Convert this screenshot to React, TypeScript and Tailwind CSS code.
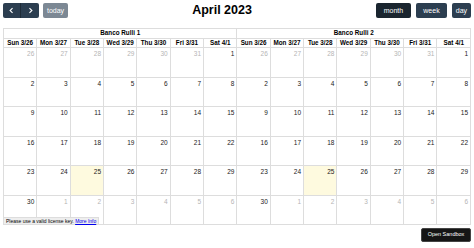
import React from 'react';

const dayHeaders = ['Sun 3/26', 'Mon 3/27', 'Tue 3/28', 'Wed 3/29', 'Thu 3/30', 'Fri 3/31', 'Sat 4/1'];
const resources = ['Banco Rulli 1', 'Banco Rulli 2'];

type Day = { n: number; other: boolean; today?: boolean };

const weeks: Day[][] = [
  [26, 27, 28, 29, 30, 31].map((n) => ({ n, other: true })).concat([{ n: 1, other: false }]),
  [2, 3, 4, 5, 6, 7, 8].map((n) => ({ n, other: false })),
  [9, 10, 11, 12, 13, 14, 15].map((n) => ({ n, other: false })),
  [16, 17, 18, 19, 20, 21, 22].map((n) => ({ n, other: false })),
  [23, 24, 25, 26, 27, 28, 29].map((n) => ({ n, other: false, today: n === 25 })),
  [{ n: 30, other: false }].concat([1, 2, 3, 4, 5, 6].map((n) => ({ n, other: true }))),
];

const Chevron: React.FC<{ dir: 'left' | 'right' }> = ({ dir }) => (
  <svg width="7" height="7" viewBox="0 0 10 10" className="block">
    <path
      d={dir === 'left' ? 'M6.5 1.5 L3 5 L6.5 8.5' : 'M3.5 1.5 L7 5 L3.5 8.5'}
      fill="none"
      stroke="white"
      strokeWidth="1.6"
    />
  </svg>
);

const App: React.FC = () => {
  return (
    <div className="w-[474px] h-[248px] bg-white p-[3px] text-black" style={{ fontFamily: '"Liberation Sans", Arial, sans-serif' }}>
      {/* Toolbar */}
      <div className="flex items-center justify-between h-[15px] mb-[10px]">
        <div className="flex items-center gap-[4px]">
          <div className="flex h-[15px] rounded-[2px] overflow-hidden">
            <button className="w-[18px] h-full bg-[#2c3e50] flex items-center justify-center border-r border-[#1e2b37]">
              <Chevron dir="left" />
            </button>
            <button className="w-[18px] h-full bg-[#2c3e50] flex items-center justify-center">
              <Chevron dir="right" />
            </button>
          </div>
          <button className="h-[15px] px-[4px] rounded-[2px] bg-[#7c8894] text-white text-[7px] leading-none">today</button>
        </div>
        <h2 className="text-[12.5px] font-bold leading-none">April 2023</h2>
        <div className="flex items-center gap-[5px]">
          <button className="h-[15px] w-[35px] rounded-[2px] bg-[#1a252f] text-white text-[7px] leading-none">month</button>
          <button className="h-[15px] w-[31px] rounded-[2px] bg-[#2c3e50] text-white text-[7px] leading-none">week</button>
          <button className="h-[15px] w-[19px] rounded-[2px] bg-[#2c3e50] text-white text-[7px] leading-none">day</button>
        </div>
      </div>

      {/* Calendar grid */}
      <div className="relative">
        <table className="w-full table-fixed border-collapse border border-[#ddd]">
          <thead>
            <tr className="h-[10px]">
              {resources.map((r) => (
                <th key={r} colSpan={7} className="border border-[#ddd] text-[6.3px] font-bold leading-none p-0">
                  {r}
                </th>
              ))}
            </tr>
            <tr className="h-[9px]">
              {resources.map((r) =>
                dayHeaders.map((d) => (
                  <th key={r + d} className="border border-[#ddd] text-[6.3px] font-bold leading-none p-0 whitespace-nowrap">
                    {d}
                  </th>
                ))
              )}
            </tr>
          </thead>
          <tbody>
            {weeks.map((week, wi) => (
              <tr key={wi} className="h-[29.5px]">
                {resources.map((r) =>
                  week.map((day, di) => (
                    <td
                      key={r + di}
                      className={`border border-[#ddd] align-top text-right p-0 pr-[2px] pt-[3px] text-[6.5px] leading-none ${
                        day.today ? 'bg-[#fefadf]' : ''
                      } ${day.other ? 'text-[#b5b5b5]' : 'text-[#222]'}`}
                    >
                      {day.n}
                    </td>
                  ))
                )}
              </tr>
            ))}
          </tbody>
        </table>
        <div className="absolute left-0 bottom-0 h-[8px] px-[2px] flex items-center bg-[#eee] border border-[#ddd] text-[5px] leading-none whitespace-nowrap">
          Please use a valid license key.&nbsp;<span className="text-[#0000ee] underline">More Info</span>
        </div>
      </div>

      <div className="flex justify-end mt-[3px]">
        <button className="h-[14px] w-[50px] rounded-[2px] bg-[#151515] border border-[#444] text-white text-[5.5px] leading-none">
          Open Sandbox
        </button>
      </div>
    </div>
  );
};

export default App;
